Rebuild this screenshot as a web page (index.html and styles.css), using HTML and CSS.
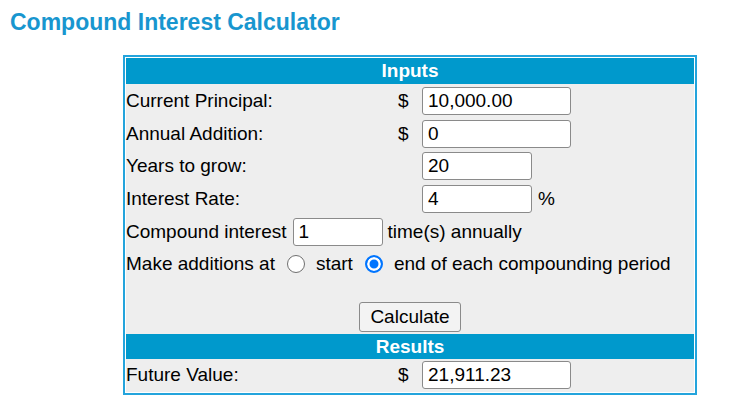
FILE: index.html
```html
<!DOCTYPE html>
<html>
<head>
<meta charset="utf-8">
<title>Compound Interest Calculator</title>
<link rel="stylesheet" href="styles.css">
</head>
<body>
<h1 class="title">Compound Interest Calculator</h1>
<div class="calc">
  <div class="calc-inner">
    <div class="head">Inputs</div>
    <div class="rows">
      <div class="row">
        <span class="label">Current Principal:</span><span class="cur">$</span><input class="field wide" type="text" value="10,000.00">
      </div>
      <div class="row">
        <span class="label">Annual Addition:</span><span class="cur">$</span><input class="field wide" type="text" value="0">
      </div>
      <div class="row">
        <span class="label">Years to grow:</span><span class="cur"></span><input class="field narrow" type="text" value="20">
      </div>
      <div class="row">
        <span class="label">Interest Rate:</span><span class="cur"></span><input class="field narrow" type="text" value="4"><span class="pct">%</span>
      </div>
      <div class="row">
        <span>Compound interest</span><input class="field tiny" type="text" value="1"><span class="after">time(s) annually</span>
      </div>
      <div class="row">
        <span>Make additions at</span>
        <input class="radio" type="radio" name="when" id="r-start"><label class="rlabel" for="r-start">start</label>
        <input class="radio" type="radio" name="when" id="r-end" checked><label class="rlabel" for="r-end">end of each compounding period</label>
      </div>
      <div class="spacer"></div>
      <div class="btn-row"><button class="btn" type="button">Calculate</button></div>
    </div>
    <div class="head">Results</div>
    <div class="row last">
      <span class="label">Future Value:</span><span class="cur">$</span><input class="field wide" type="text" value="21,911.23">
    </div>
  </div>
</div>
</body>
</html>
```
FILE: styles.css
```css
html, body {
  margin: 0;
  padding: 0;
  background: #ffffff;
}
body {
  font-family: "Liberation Sans", Arial, sans-serif;
  font-size: 19px;
  color: #000;
}
.title {
  margin: 9px 0 0 10px;
  font-size: 23px;
  line-height: 26px;
  font-weight: bold;
  color: #1896cf;
}
.calc {
  margin: 20px 0 0 123px;
  width: 574px;
  box-sizing: border-box;
  border: 2px solid #24a4dc;
  padding: 1px;
  background: #fff;
}
.calc-inner {
  background: #eeeeee;
  display: flex;
  flex-direction: column;
}
.head {
  height: 25.5px;
  line-height: 25.5px;
  background: #0099cc;
  color: #fff;
  font-weight: bold;
  text-align: center;
}
.rows {
  padding-top: 1px;
  display: flex;
  flex-direction: column;
}
.row {
  height: 32.7px;
  display: flex;
  align-items: center;
  white-space: nowrap;
}
.row.last {
  height: 32.5px;
}
.label {
  width: 266px;
  flex: none;
}
.cur {
  width: 30px;
  box-sizing: border-box;
  padding-left: 6px;
  flex: none;
}
.field {
  box-sizing: border-box;
  height: 28px;
  border: 1px solid #8a8a8a;
  border-radius: 3px;
  background: #fff;
  font-family: "Liberation Sans", Arial, sans-serif;
  font-size: 19px;
  color: #000;
  padding: 0 5px;
  margin: 0;
  flex: none;
}
.wide { width: 149px; }
.narrow { width: 110px; }
.tiny { width: 90px; margin-left: 6px; }
.pct { margin-left: 6px; }
.after { margin-left: 5px; }
.radio {
  -webkit-appearance: none;
  appearance: none;
  width: 18px;
  height: 18px;
  margin: 0 0 0 12px;
  box-sizing: border-box;
  border: 1.5px solid #6f6f6f;
  border-radius: 50%;
  background: #fff;
  flex: none;
}
.radio:checked {
  border: 2px solid #0075ff;
  background: #0075ff;
  box-shadow: inset 0 0 0 2.5px #fff;
}
.rlabel {
  margin-left: 11px;
}
.spacer {
  height: 19px;
}
.btn-row {
  height: 34px;
  display: flex;
  align-items: center;
  justify-content: center;
}
.btn {
  width: 102px;
  height: 30px;
  box-sizing: border-box;
  border: 1px solid #8a8a8a;
  border-radius: 3px;
  background: #f3f3f3;
  font-family: "Liberation Sans", Arial, sans-serif;
  font-size: 19px;
  color: #000;
  padding: 0;
  margin: 0;
}
```
